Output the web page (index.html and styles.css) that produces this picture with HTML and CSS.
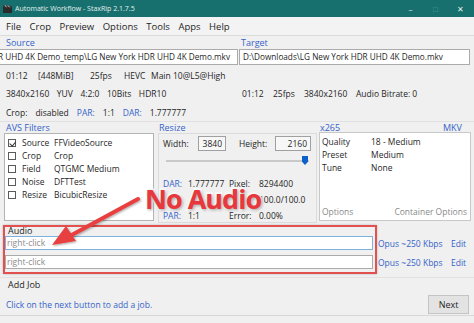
FILE: index.html
```html
<!DOCTYPE html>
<html lang="en">

<head>
    <meta charset="UTF-8">
    <title>Automatic Workflow - StaxRip</title>
    <link rel="stylesheet" href="styles.css">
</head>

<body>
    <div class="window">

        <div class="titlebar">
            <svg class="app-icon" viewBox="0 0 9 8">
                <rect x="0" y="2" width="9" height="6" fill="#2b2b2b" />
                <path d="M0 0 L9 1 L9 2.5 L0 2 Z" fill="#3a3a3a" />
                <path d="M2 0.2 L3.5 2.2 M5 0.5 L6.5 2.3" stroke="#d9d9d9" stroke-width="0.8" />
            </svg>
            <span class="title">Automatic Workflow - StaxRip 2.1.7.5</span>
            <div class="controls">
                <span>&#8211;</span>
                <span class="max">&#9633;</span>
                <span>&#10005;</span>
            </div>
        </div>

        <div class="menubar">
            <span>File</span>
            <span>Crop</span>
            <span>Preview</span>
            <span>Options</span>
            <span>Tools</span>
            <span>Apps</span>
            <span>Help</span>
        </div>

        <div class="paths">
            <div class="pathcol source">
                <div class="label">Source</div>
                <div class="field"><span>D:\Downloads\LG New York HDR UHD 4K Demo_temp\LG New York HDR UHD 4K Demo.mkv</span></div>
            </div>
            <div class="pathcol target">
                <div class="label">Target</div>
                <div class="field"><span>D:\Downloads\LG New York HDR UHD 4K Demo.mkv</span></div>
            </div>
        </div>

        <div class="info">
            <div class="info-left">
                <div class="row r1">
                    <span>01:12</span><span>[448MiB]</span><span>25fps</span><span>HEVC</span><span>Main 10@L5@High</span>
                </div>
                <div class="row r2">
                    <span>3840x2160</span><span>YUV</span><span>4:2:0</span><span>10Bits</span><span>HDR10</span>
                </div>
                <div class="row r3">
                    <span>Crop:</span><span>disabled</span><span class="link">PAR:</span><span>1:1</span><span class="link">DAR:</span><span>1.777777</span>
                </div>
            </div>
            <div class="info-right">
                <div class="row r4">
                    <span>01:12</span><span>25fps</span><span>3840x2160</span><span>Audio Bitrate: 0</span>
                </div>
            </div>
        </div>

        <div class="middle">
            <div class="group filters">
                <div class="group-head"><span class="link">AVS Filters</span></div>
                <div class="list">
                    <div class="filter"><span class="check on"></span><span class="fname">Source</span><span>FFVideoSource</span></div>
                    <div class="filter"><span class="check"></span><span class="fname">Crop</span><span>Crop</span></div>
                    <div class="filter"><span class="check"></span><span class="fname">Field</span><span>QTGMC Medium</span></div>
                    <div class="filter"><span class="check"></span><span class="fname">Noise</span><span>DFTTest</span></div>
                    <div class="filter"><span class="check"></span><span class="fname">Resize</span><span>BicubicResize</span></div>
                </div>
            </div>

            <div class="group resize">
                <div class="group-head"><span class="link">Resize</span></div>
                <div class="panel">
                    <div class="size-row">
                        <span class="wlabel">Width:</span>
                        <span class="num w">3840</span>
                        <span class="hlabel">Height:</span>
                        <span class="num h">2160</span>
                    </div>
                    <div class="slider">
                        <div class="track"></div>
                        <div class="thumb"></div>
                    </div>
                    <div class="stats">
                        <span class="link">DAR:</span><span>1.777777</span><span>Pixel:</span><span>8294400</span>
                        <span></span><span></span><span></span><span>100.0/100.0</span>
                        <span class="link">PAR:</span><span>1:1</span><span>Error:</span><span>0.00%</span>
                    </div>
                </div>
            </div>

            <div class="group encoder">
                <div class="group-head"><span class="link">x265</span><span class="link">MKV</span></div>
                <div class="list opts">
                    <div class="opt"><span>Quality</span><span>18 - Medium</span></div>
                    <div class="opt"><span>Preset</span><span>Medium</span></div>
                    <div class="opt"><span>Tune</span><span>None</span></div>
                    <div class="opt-foot"><span>Options</span><span>Container Options</span></div>
                </div>
            </div>
        </div>

        <div class="audio">
            <div class="sub-label">Audio</div>
            <div class="audio-row">
                <div class="field focus">right-click</div>
                <span class="link codec">Opus ~250 Kbps</span>
                <span class="link">Edit</span>
            </div>
            <div class="audio-row">
                <div class="field">right-click</div>
                <span class="link codec">Opus ~250 Kbps</span>
                <span class="link">Edit</span>
            </div>
        </div>

        <div class="jobs">
            <div class="sub-label">Add Job</div>
            <div class="job-row">
                <span class="link">Click on the next button to add a job.</span>
                <button>Next</button>
            </div>
        </div>

        <!-- annotation drawn over the screenshot -->
        <div class="mark-box"></div>
        <svg class="arrow" viewBox="0 0 474 323">
            <defs>
                <filter id="soft" x="-20%" y="-20%" width="140%" height="140%">
                    <feDropShadow dx="1" dy="1" stdDeviation="1" flood-color="#000" flood-opacity="0.35" />
                </filter>
            </defs>
            <g filter="url(#soft)">
                <line x1="138" y1="199" x2="68" y2="237" stroke="#e8403f" stroke-width="4" stroke-linecap="round" />
                <polygon points="52,245 76,241 66,226" fill="#e8403f" />
            </g>
        </svg>
        <div class="no-audio">No Audio</div>
    </div>
</body>

</html>
```

FILE: styles.css
```css
* {
    box-sizing: border-box;
}

body {
    margin: 0;
    font-family: "Open Sans", "Noto Sans", sans-serif;
    font-size: 8.5px;
    color: #1f1f1f;
    background: #fff;
}

.window {
    position: relative;
    width: 474px;
    height: 323px;
    background: #f0f0f0;
    overflow: hidden;
}

.link {
    color: #3563c9;
}

/* title bar */
.titlebar {
    height: 17px;
    background: #17706d;
    color: #e3efee;
    display: flex;
    align-items: center;
    padding-left: 3px;
    font-size: 7px;
}

.app-icon {
    width: 9px;
    height: 8px;
    margin-right: 3px;
}

.controls {
    margin-left: auto;
    display: flex;
    padding-right: 1px;
}

.controls span {
    width: 25px;
    text-align: center;
    font-size: 8px;
}

.controls .max {
    color: #5f9f9c;
}

/* menu */
.menubar {
    height: 19px;
    display: flex;
    align-items: center;
    gap: 8.5px;
    padding-left: 6px;
    font-size: 9.5px;
    background: #f3f3f3;
    border-bottom: 1px solid #dcdcdc;
}

/* source / target */
.paths {
    display: grid;
    grid-template-columns: 238px 1fr;
    gap: 1px;
    padding-right: 4px;
}

.label {
    height: 13px;
    line-height: 13px;
    padding-left: 6px;
    font-size: 9px;
    color: #3563c9;
}

.target .label {
    padding-left: 2px;
}

.field {
    height: 16px;
    line-height: 14px;
    background: #fff;
    border: 1px solid #ababab;
    padding: 0 3px;
    white-space: nowrap;
    overflow: hidden;
    display: flex;
}

.paths .field {
    font-size: 8.2px;
}

.source .field {
    justify-content: flex-end;
    border-left: none;
    padding-right: 7px;
}

/* media info */
.info {
    display: grid;
    grid-template-columns: 238px 1fr;
    height: 57px;
    border-bottom: 1px solid #e0e0e0;
}

.info-left {
    padding: 1px 0 0 6px;
}

.row {
    display: flex;
    align-items: center;
    height: 18.5px;
    white-space: nowrap;
}

.r1 {
    display: grid;
    grid-template-columns: 32px 52px 34px 27px auto;
}

.r2 {
    gap: 7.5px;
}

.r3 {
    gap: 8px;
}

.r4 {
    display: grid;
    grid-template-columns: 31px 31px 52px auto;
}

.info-right {
    display: flex;
    align-items: center;
    padding-left: 4px;
}

/* filters, resize, encoder */
.middle {
    display: grid;
    grid-template-columns: 150px 165px 152px;
    padding-left: 4px;
    height: 101px;
}

.group-head {
    height: 11px;
    line-height: 11px;
    padding-left: 2px;
    font-size: 9px;
    display: flex;
    justify-content: space-between;
}

.list {
    height: 88px;
    background: #fff;
    border: 1px solid #b4b4b4;
    padding-top: 2px;
}

.filter {
    display: flex;
    align-items: center;
    height: 13px;
    padding-left: 3px;
}

.check {
    width: 8px;
    height: 8px;
    border: 1px solid #5a5a5a;
    margin-right: 6px;
    position: relative;
}

.check.on::after {
    content: "";
    position: absolute;
    left: 1.5px;
    top: 0;
    width: 2.5px;
    height: 4.5px;
    border: solid #333;
    border-width: 0 1px 1px 0;
    transform: rotate(40deg);
}

.fname {
    width: 32px;
}

.resize {
    padding: 0 2px 0 4px;
}

.resize .group-head {
    padding-left: 1px;
}

.panel {
    height: 90px;
    border: 1px solid #dcdcdc;
    padding: 2px 0 0 4px;
}

.size-row {
    display: flex;
    align-items: center;
    height: 15px;
}

.wlabel {
    width: 35px;
}

.num {
    height: 15px;
    line-height: 13px;
    border: 1px solid #a0a0a0;
    background: #f7f7f7;
    text-align: right;
    padding-right: 3px;
}

.num.w {
    width: 28px;
}

.num.h {
    width: 36px;
    margin-left: 6px;
}

.hlabel {
    width: 30px;
    margin-left: 13px;
}

.slider {
    position: relative;
    height: 20px;
}

.track {
    position: absolute;
    left: 3px;
    right: 7px;
    top: 9px;
    height: 2px;
    background: #c9c9c9;
}

.thumb {
    position: absolute;
    left: 139px;
    top: 5px;
    width: 6px;
    height: 9px;
    background: #0c62c6;
    clip-path: polygon(0 0, 100% 0, 100% 65%, 50% 100%, 0 65%);
}

.stats {
    display: grid;
    grid-template-columns: 25px 41px 30px 1fr;
    grid-auto-rows: 16px;
    align-items: center;
    margin-top: 4px;
    white-space: nowrap;
}

.encoder .group-head {
    padding: 0 9px 0 1px;
}

.opts {
    height: 89px;
    margin-top: -1px;
    display: flex;
    flex-direction: column;
    padding: 2px 0 0 2px;
    border-color: #c8c8c8;
}

.opt {
    display: flex;
    align-items: center;
    height: 13px;
}

.opt span:first-child {
    width: 49px;
}

.opt-foot {
    margin-top: auto;
    display: flex;
    justify-content: space-between;
    padding: 0 3px 1px 0;
    color: #8a8a8a;
    height: 14px;
}

/* audio */
.audio {
    padding: 2px 0 0 5px;
    height: 55px;
    border-bottom: 1px solid #e2e2e2;
}

.sub-label {
    height: 11px;
    line-height: 11px;
    padding-left: 3px;
    font-size: 9px;
}

.audio-row {
    display: flex;
    align-items: center;
    height: 14px;
    margin-bottom: 5px;
    white-space: nowrap;
}

.audio-row .field {
    width: 368px;
    height: 14px;
    line-height: 12px;
    color: #8c8c8c;
    padding-left: 1px;
}

.audio-row .field.focus {
    border-color: #7db2de;
}

.codec {
    width: 73px;
    margin-left: 5px;
}

/* jobs */
.jobs {
    padding: 2px 0 0 5px;
    height: 38px;
    border-bottom: 1px solid #d8d8d8;
}

.jobs .sub-label {
    height: 10px;
    line-height: 10px;
}

.job-row {
    display: flex;
    justify-content: space-between;
    align-items: center;
    height: 26px;
    padding: 2px 5px 0 1px;
}

button {
    width: 41px;
    height: 19px;
    font-family: inherit;
    font-size: 9px;
    color: #1f1f1f;
    background: #e3e3e3;
    border: 1px solid #c4c4c4;
    padding: 0;
}

/* annotation overlay */
.mark-box {
    position: absolute;
    left: 3px;
    top: 225px;
    width: 374px;
    height: 49px;
    border: 2px solid #e2514f;
    box-shadow: 0 0 2px rgba(0, 0, 0, 0.25);
}

.arrow {
    position: absolute;
    left: 0;
    top: 0;
    width: 474px;
    height: 323px;
}

.no-audio {
    position: absolute;
    left: 145px;
    top: 184px;
    font-family: "Open Sans", sans-serif;
    font-weight: 700;
    font-size: 27px;
    letter-spacing: -1px;
    line-height: 30px;
    color: #e8383d;
    -webkit-text-stroke: 3px #fff;
    paint-order: stroke fill;
    text-shadow: 1px 1px 3px rgba(0, 0, 0, 0.4);
}
```
